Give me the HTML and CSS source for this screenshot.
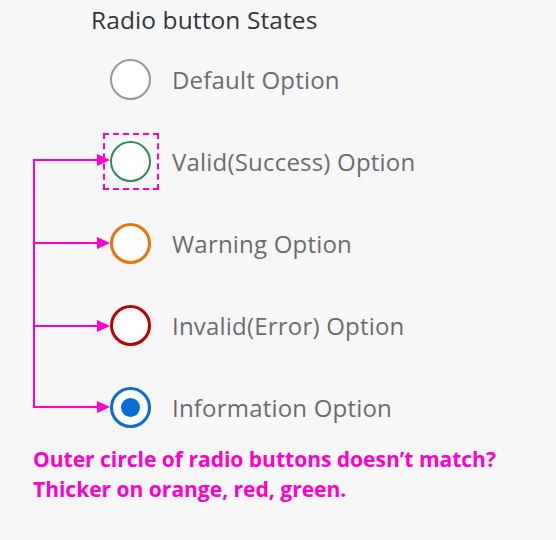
FILE: index.html
```html
<!DOCTYPE html>
<html lang="en">
<head>
    <meta charset="UTF-8">
    <meta name="viewport" content="width=device-width, initial-scale=1.0">
    <title>Radio button States</title>
    <link rel="stylesheet" href="styles.css">
</head>
<body>
    <div class="page">
        <h1 class="title">Radio button States</h1>

        <!-- Radio states list -->
        <div class="options">
            <label class="option"><span class="radio"></span>Default Option</label>
            <label class="option"><span class="radio success"></span>Valid(Success) Option</label>
            <label class="option"><span class="radio warning"></span>Warning Option</label>
            <label class="option"><span class="radio error"></span>Invalid(Error) Option</label>
            <label class="option"><span class="radio info"></span>Information Option</label>
        </div>

        <p class="note">Outer circle of radio buttons doesn’t match?<br>Thicker on orange, red, green.</p>

        <!-- Annotation arrows -->
        <svg class="arrows" width="556" height="540" viewBox="0 0 556 540">
            <g stroke="#ff00cc" stroke-width="2" fill="none">
                <path d="M34 160 V407"/>
                <path d="M33 160 H99"/>
                <path d="M33 243 H99"/>
                <path d="M33 326 H99"/>
                <path d="M33 407 H99"/>
            </g>
            <g fill="#ff00cc">
                <polygon points="97,154 110,160 97,166"/>
                <polygon points="97,237 110,243 97,249"/>
                <polygon points="97,320 110,326 97,332"/>
                <polygon points="97,401 110,407 97,413"/>
            </g>
        </svg>
    </div>
</body>
</html>
```

FILE: styles.css
```css
/* Page */
body {
    margin: 0;
    background: #f7f7f7;
    font-family: 'Open Sans', 'Noto Sans', sans-serif;
}

.page {
    position: relative;
    width: 556px;
    height: 540px;
    overflow: hidden;
}

.title {
    margin: 0;
    padding: 4px 0 0 91px;
    font-size: 24.5px;
    font-weight: normal;
    line-height: 32px;
    letter-spacing: 0.1px;
    color: #32363a;
}

/* Radio rows */
.options {
    display: flex;
    flex-direction: column;
    padding-left: 110px;
    margin-top: 2px;
}

.option {
    display: flex;
    align-items: center;
    gap: 21px;
    height: 82px;
    font-size: 24px;
    letter-spacing: 0.2px;
    color: #6a6d70;
}

.radio {
    position: relative;
    flex: none;
    width: 41px;
    height: 41px;
    box-sizing: border-box;
    border-radius: 50%;
    border: 2px solid #8d99a6;
    background: #fff;
}

.radio.success {
    border-color: #2e8b57;
}

/* dashed highlight box around the green radio */
.radio.success::before {
    content: "";
    position: absolute;
    top: -10px;
    left: -9px;
    width: 56px;
    height: 57px;
    box-sizing: border-box;
    border: 2px dashed #ff00cc;
}

.radio.warning {
    border: 3px solid #e9730c;
}

.radio.error {
    border: 3px solid #bb0000;
}

.radio.info {
    border: 3px solid #0a6ed1;
}

.radio.info::after {
    content: "";
    position: absolute;
    top: 8px;
    left: 8px;
    width: 19px;
    height: 19px;
    border-radius: 50%;
    background: #0a6ed1;
}

/* Annotation */
.note {
    margin: -4px 0 0 33px;
    font-size: 21px;
    font-weight: bold;
    line-height: 30px;
    color: #ff00cc;
}

.arrows {
    position: absolute;
    top: 0;
    left: 0;
    pointer-events: none;
}
```
